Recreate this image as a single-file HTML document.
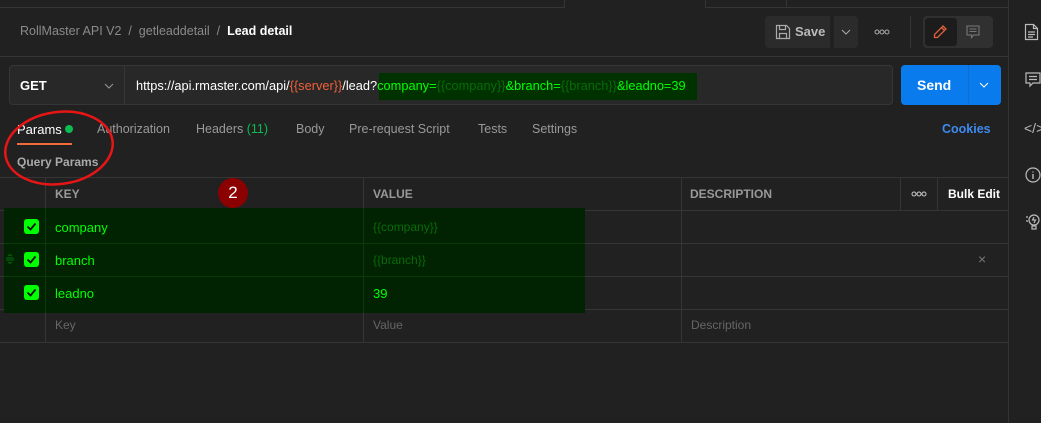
<!DOCTYPE html><html><head><style>
*{margin:0;padding:0;box-sizing:border-box}
body{width:1041px;height:423px;background:#212121;font-family:"Liberation Sans",sans-serif;position:relative;overflow:hidden;color:#ccc}
.a{position:absolute}
.t{font-size:13px;white-space:nowrap}
.hl{position:absolute;height:1px;background:#353535}
.vl{position:absolute;width:1px;background:#353535}
.cb{position:absolute;width:15px;height:15px;background:#0f0;border-radius:3px}
.cb svg{position:absolute;left:2px;top:2px}
</style></head><body>
<div class="hl" style="left:0;top:7px;width:1008px"></div>
<div class="vl" style="left:564px;top:0;height:7px"></div>
<div class="vl" style="left:705px;top:0;height:7px"></div>
<div class="vl" style="left:786px;top:0;height:7px"></div>
<div class="a" style="left:565px;top:0;width:140px;height:8px;background:#212121"></div>
<div class="a t" style="left:20px;top:24px;color:#8a8a8a;font-size:12.5px">RollMaster API V2 &nbsp;/&nbsp; getleaddetail &nbsp;/&nbsp; <b style="color:#fff">Lead detail</b></div>
<div class="a" style="left:765px;top:16px;width:65px;height:32px;background:#2b2b2b;border-radius:4px 0 0 4px"></div>
<svg class="a" style="left:775px;top:24px" width="16" height="16" viewBox="0 0 16 16" fill="none" stroke="#aaa" stroke-width="1.2"><path d="M1.5 1.5h10l3 3v10h-13z"/><path d="M4.5 1.5v4h6v-4"/><path d="M4.5 14.5v-5h7v5"/></svg>
<div class="a t" style="left:795px;top:24px;color:#bbb;font-weight:bold">Save</div>
<div class="a" style="left:834px;top:16px;width:24px;height:32px;background:#2b2b2b;border-radius:0 4px 4px 0"></div>
<svg class="a" style="left:841px;top:28px" width="10" height="8"><path d="M1 2l4 4 4-4" stroke="#aaa" fill="none"/></svg>
<svg class="a" style="left:874px;top:29px" width="16" height="6" fill="none" stroke="#aaa" stroke-width="1"><circle cx="3" cy="3" r="2"/><circle cx="8" cy="3" r="2"/><circle cx="13" cy="3" r="2"/></svg>
<div class="vl" style="left:910px;top:16px;height:32px"></div>
<div class="a" style="left:923px;top:16px;width:70px;height:32px;background:#303030;border-radius:4px"></div>
<div class="a" style="left:925px;top:18px;width:32px;height:28px;background:#1c1c1c;border-radius:3px"></div>
<svg class="a" style="left:932px;top:24px" width="16" height="16" viewBox="0 0 16 16" fill="none" stroke="#e0603a" stroke-width="1.3"><path d="M11 2l3 3-8.5 8.5H2.5v-3z M9.5 3.5l3 3"/></svg>
<svg class="a" style="left:966px;top:25px" width="14" height="14" viewBox="0 0 14 14" fill="none" stroke="#777" stroke-width="1.1"><path d="M1 1h12v9H7.5L5.5 12.5V10H1z M3.5 4h7 M3.5 6.5h7"/></svg>
<div class="hl" style="left:0;top:56px;width:1008px"></div>
<div class="a" style="left:9px;top:65px;width:884px;height:40px;background:#282828;border:1px solid #363636;border-radius:4px"></div>
<div class="vl" style="left:124px;top:66px;height:38px;background:#363636"></div>
<div class="a t" style="left:20px;top:78px;color:#fff;font-weight:bold">GET</div>
<svg class="a" style="left:104px;top:82px" width="10" height="8"><path d="M1 2l4 4 4-4" stroke="#999" fill="none"/></svg>
<div class="a" style="left:379px;top:73px;width:318px;height:27px;background:#003200"></div>
<div class="a t" style="left:136px;top:78px;color:#fff;font-size:12.8px">https://api.rmaster.com/api/<span style="color:#f0603a">{{server}}</span>/lead?<span style="color:#0f0">company=<span style="color:#0a6a0a">{{company}}</span>&amp;branch=<span style="color:#0a6a0a">{{branch}}</span>&amp;leadno=39</span></div>
<div class="a" style="left:901px;top:65px;width:100px;height:40px;background:#097bed;border-radius:4px"></div>
<div class="vl" style="left:968px;top:65px;height:40px;background:#1a6ac8"></div>
<div class="a t" style="left:917px;top:77px;color:#fff;font-weight:bold;font-size:14px">Send</div>
<svg class="a" style="left:979px;top:81px" width="10" height="8"><path d="M1 2l4 4 4-4" stroke="#fff" fill="none"/></svg>
<div class="a t" style="left:17px;top:122px;color:#fff">Params</div>
<div class="a" style="left:65px;top:125px;width:8px;height:8px;border-radius:50%;background:#0cbb52"></div>
<div class="a" style="left:17px;top:143px;width:55px;height:2px;background:#f26b3a"></div>
<div class="a t" style="left:97px;top:122px;color:#999;font-size:12.5px">Authorization</div>
<div class="a t" style="left:196px;top:122px;color:#999;font-size:12.5px">Headers <span style="color:#0cbb52">(11)</span></div>
<div class="a t" style="left:296px;top:122px;color:#999;font-size:12.5px">Body</div>
<div class="a t" style="left:349px;top:122px;color:#999;font-size:12.5px">Pre-request Script</div>
<div class="a t" style="left:478px;top:122px;color:#999;font-size:12.5px">Tests</div>
<div class="a t" style="left:532px;top:122px;color:#999;font-size:12.5px">Settings</div>
<div class="a t" style="left:942px;top:122px;color:#3e8af0;font-weight:bold;font-size:12.5px">Cookies</div>
<div class="a t" style="left:17px;top:155px;color:#aaa;font-weight:bold;font-size:12px">Query Params</div>
<div class="hl" style="left:0;top:177px;width:1008px"></div>
<div class="hl" style="left:0;top:210px;width:1008px"></div>
<div class="hl" style="left:0;top:243px;width:1008px"></div>
<div class="hl" style="left:0;top:276px;width:1008px"></div>
<div class="hl" style="left:0;top:309px;width:1008px"></div>
<div class="hl" style="left:0;top:342px;width:1008px"></div>
<div class="vl" style="left:45px;top:177px;height:165px"></div>
<div class="vl" style="left:363px;top:177px;height:165px"></div>
<div class="vl" style="left:681px;top:177px;height:165px"></div>
<div class="vl" style="left:900px;top:177px;height:33px"></div>
<div class="vl" style="left:937px;top:177px;height:33px"></div>
<div class="a t" style="left:55px;top:187px;color:#999;font-weight:bold;font-size:12px">KEY</div>
<div class="a t" style="left:373px;top:187px;color:#999;font-weight:bold;font-size:12px">VALUE</div>
<div class="a t" style="left:690px;top:187px;color:#999;font-weight:bold;font-size:12px">DESCRIPTION</div>
<svg class="a" style="left:911px;top:191px" width="16" height="6" fill="none" stroke="#ccc" stroke-width="1"><circle cx="3" cy="3" r="2"/><circle cx="8" cy="3" r="2"/><circle cx="13" cy="3" r="2"/></svg>
<div class="a t" style="left:948px;top:187px;color:#fff;font-weight:bold;font-size:12px">Bulk Edit</div>
<div class="a" style="left:4px;top:208px;width:581px;height:105px;background:#002400;opacity:.95"></div>
<div class="hl" style="left:4px;top:243px;width:581px;background:#0a3a0a"></div>
<div class="hl" style="left:4px;top:276px;width:581px;background:#0a3a0a"></div>
<div class="vl" style="left:45px;top:208px;height:105px;background:#0a3a0a"></div>
<div class="vl" style="left:363px;top:208px;height:105px;background:#0a3a0a"></div>
<div class="cb" style="left:24px;top:219px"><svg width="11" height="11"><path d="M1.5 5.5l3 3 5-6" stroke="#111" stroke-width="1.8" fill="none"/></svg></div>
<div class="cb" style="left:24px;top:252px"><svg width="11" height="11"><path d="M1.5 5.5l3 3 5-6" stroke="#111" stroke-width="1.8" fill="none"/></svg></div>
<div class="cb" style="left:24px;top:285px"><svg width="11" height="11"><path d="M1.5 5.5l3 3 5-6" stroke="#111" stroke-width="1.8" fill="none"/></svg></div>
<svg class="a" style="left:5px;top:254px" width="10" height="10"><path d="M1 4h8M1 6h8M3 2l2-1.5L7 2M3 8l2 1.5L7 8" stroke="#0a6a0a" fill="none"/></svg>
<div class="a t" style="left:55px;top:220px;color:#0f0">company</div>
<div class="a t" style="left:55px;top:253px;color:#0f0">branch</div>
<div class="a t" style="left:55px;top:286px;color:#0f0">leadno</div>
<div class="a t" style="left:373px;top:220px;color:#0a6a0a;font-size:12px">{{company}}</div>
<div class="a t" style="left:373px;top:253px;color:#0a6a0a;font-size:12px">{{branch}}</div>
<div class="a t" style="left:373px;top:286px;color:#0f0">39</div>
<div class="a t" style="left:978px;top:251px;color:#777;font-size:14px">×</div>
<div class="a t" style="left:55px;top:318px;color:#666;font-size:12px">Key</div>
<div class="a t" style="left:373px;top:318px;color:#666;font-size:12px">Value</div>
<div class="a t" style="left:691px;top:318px;color:#666;font-size:12px">Description</div>
<svg class="a" style="left:0;top:100px" width="130" height="100"><ellipse cx="59" cy="48" rx="54" ry="36" stroke="#e81515" stroke-width="2.5" fill="none" transform="rotate(-8 59 48)"/></svg>
<div class="a" style="left:218px;top:178px;width:30px;height:30px;border-radius:50%;background:#8b0000;color:#fff;font-size:17px;text-align:center;line-height:30px">2</div>
<div class="vl" style="left:1008px;top:0;height:423px;background:#333"></div>
<svg class="a" style="left:1024px;top:23px" width="16" height="18" viewBox="0 0 16 18" fill="none" stroke="#bbb" stroke-width="1.2"><path d="M1.5 1.5h8l4 4v11h-12z M9.5 1.5v4h4 M4 9h7 M4 11.5h7 M4 14h5"/></svg>
<svg class="a" style="left:1025px;top:72px" width="16" height="16" viewBox="0 0 16 16" fill="none" stroke="#bbb" stroke-width="1.2"><path d="M1 1h14v10H8l-3 3v-3H1z M4 4.5h8 M4 7.5h8"/></svg>
<div class="a t" style="left:1024px;top:120px;color:#bbb;font-size:14px">&lt;/&gt;</div>
<svg class="a" style="left:1025px;top:167px" width="16" height="16"><circle cx="8" cy="8" r="7" stroke="#bbb" fill="none" stroke-width="1.2"/><path d="M8 7v5M8 4.5v1" stroke="#bbb" stroke-width="1.4"/></svg>
<svg class="a" style="left:1025px;top:213px" width="16" height="20" fill="none" stroke="#bbb" stroke-width="1.2"><circle cx="9" cy="7" r="5"/><path d="M7 13h4v3h-4z M1 4h2 M1 8h2 M9 4l-1.5 3h3L9 10"/></svg>
</body></html>
